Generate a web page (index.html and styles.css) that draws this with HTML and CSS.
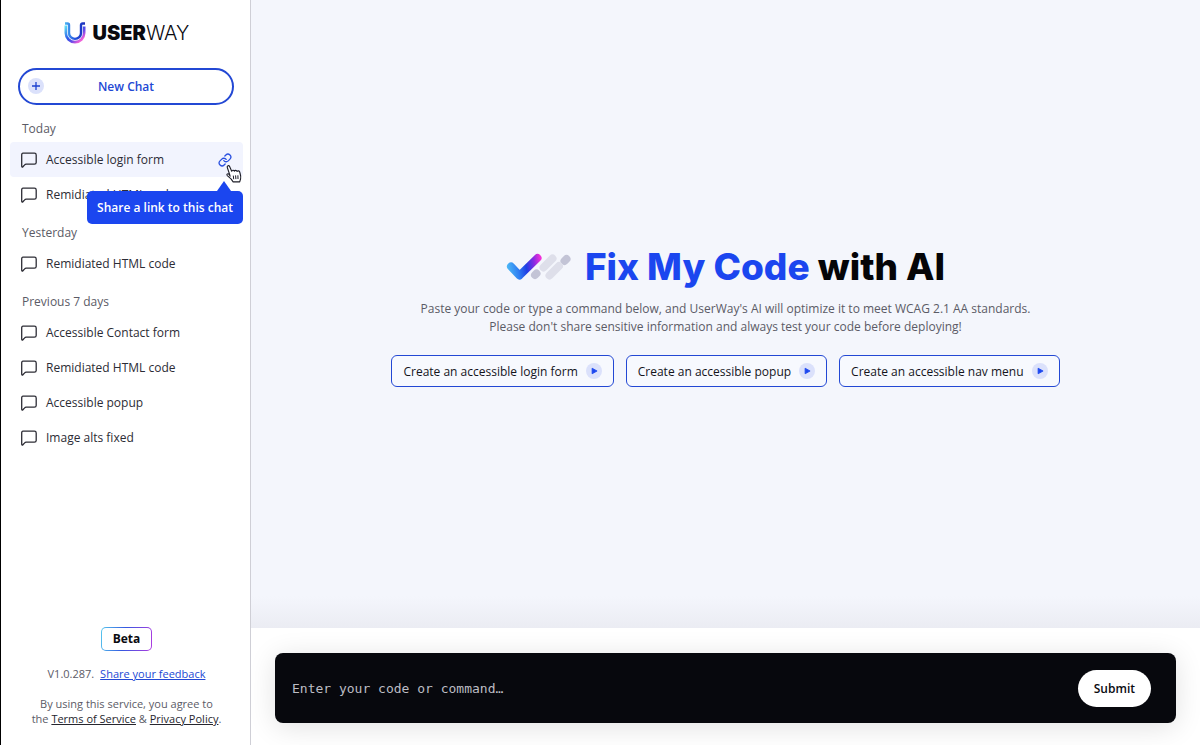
FILE: index.html
```html
<!DOCTYPE html>
<html lang="en">
  <head>
    <meta charset="utf-8" />
    <meta name="viewport" content="width=device-width, initial-scale=1" />
    <title>UserWay - Fix My Code with AI</title>
    <link rel="stylesheet" href="styles.css">
  </head>
  <body>
    <!-- shared icons -->
    <svg class="sprite" aria-hidden="true">
      <symbol id="icon-chat" viewBox="0 0 18 18">
        <path d="M3 2.2h11.4a1.8 1.8 0 0 1 1.8 1.8v7.4a1.8 1.8 0 0 1-1.8 1.8H6.3c-.8 0-1.4.3-1.9.9l-1.5 1.7c-.5.6-1.2.3-1.2-.5V4c0-1 .5-1.8 1.3-1.8z" fill="none" stroke="currentColor" stroke-width="1.3" stroke-linejoin="round" />
      </symbol>
      <symbol id="icon-play" viewBox="0 0 16 16">
        <circle cx="8" cy="8" r="8" fill="#dbe1fb" />
        <path d="M6.1 5.2v5.6l5-2.8z" fill="#1b46ef" stroke="#1b46ef" stroke-width=".8" stroke-linejoin="round" />
      </symbol>
    </svg>

    <aside class="sidebar">
      <a class="logo" href="#" aria-label="UserWay">
        <svg class="logo-mark" viewBox="0 0 22 22" aria-hidden="true">
          <defs>
            <linearGradient id="logo-outer" x1="0" y1="0" x2="1" y2="1">
              <stop offset="0" stop-color="#5fe0f5" />
              <stop offset=".45" stop-color="#2a55e8" />
              <stop offset=".65" stop-color="#6a4be8" />
              <stop offset=".85" stop-color="#ee5fd8" />
            </linearGradient>
            <linearGradient id="logo-inner" x1="0" y1="0" x2="1" y2="0">
              <stop offset="0" stop-color="#48b4f2" />
              <stop offset=".5" stop-color="#2450e0" />
              <stop offset="1" stop-color="#1a2fb8" />
            </linearGradient>
          </defs>
          <path d="M1.8 3.6v7.5a9.2 9 0 0 0 18.4 0V4.6" fill="none" stroke="url(#logo-outer)" stroke-width="2.6" />
          <path d="M1 1.5h2.4c1 0 1.6.6 1.6 1.6v7.9a6 5.9 0 0 0 12 0V3.1c0-1 .6-1.6 1.6-1.6h2.4" fill="none" stroke="url(#logo-inner)" stroke-width="2.4" />
        </svg>
        <span class="logo-text"><b>USER</b>WAY</span>
      </a>

      <button class="new-chat" type="button">
        <svg class="plus" viewBox="0 0 16 16" aria-hidden="true">
          <circle cx="8" cy="8" r="8" fill="#dbe1fb" />
          <path d="M8 4v8M4 8h8" stroke="#1b3fd0" stroke-width="1.3" />
        </svg>
        New Chat
      </button>

      <nav class="history">
        <h2>Today</h2>
        <ul>
          <li class="active">
            <a class="chat" href="#"><svg class="chat-icon"><use href="#icon-chat" /></svg>Accessible login form</a>
            <button class="share" type="button" aria-label="Share a link to this chat">
              <svg viewBox="0 0 24 24" aria-hidden="true">
                <path d="M10 13a5 5 0 0 0 7.54.54l3-3a5 5 0 0 0-7.07-7.07l-1.72 1.71M14 11a5 5 0 0 0-7.54-.54l-3 3a5 5 0 0 0 7.07 7.07l1.71-1.71" fill="none" stroke="#2a50e0" stroke-width="2.2" stroke-linecap="round" />
              </svg>
            </button>
            <span class="tooltip" role="tooltip">Share a link to this chat</span>
            <svg class="cursor" viewBox="0 0 18 20" aria-hidden="true">
              <path d="M5.2 12.1 2.3 3.5C1.7 1.7 3.9.9 4.6 2.5l2.1 4.8c.2-1.3 2.2-1.5 2.6-.1.5-1.2 2.3-1.1 2.7.2.8-.9 2.4-.6 2.7.6.5 2 1.6 4.5.9 6.9l-.9 3H8.2c-1.3-2.7-3.7-4.6-5.9-6.3-1-.9.1-2.4 1.4-1.6z" fill="#fff" stroke="#1c1c26" stroke-width="1.1" stroke-linejoin="round" />
              <path d="M8.3 11.6l.4 3.6M10.6 11.4l.3 3.7M12.9 11.3l.1 3.7" stroke="#1c1c26" stroke-width="1" />
            </svg>
          </li>
          <li><a class="chat" href="#"><svg class="chat-icon"><use href="#icon-chat" /></svg>Remidiated HTML code</a></li>
        </ul>
        <h2>Yesterday</h2>
        <ul>
          <li><a class="chat" href="#"><svg class="chat-icon"><use href="#icon-chat" /></svg>Remidiated HTML code</a></li>
        </ul>
        <h2>Previous 7 days</h2>
        <ul>
          <li><a class="chat" href="#"><svg class="chat-icon"><use href="#icon-chat" /></svg>Accessible Contact form</a></li>
          <li><a class="chat" href="#"><svg class="chat-icon"><use href="#icon-chat" /></svg>Remidiated HTML code</a></li>
          <li><a class="chat" href="#"><svg class="chat-icon"><use href="#icon-chat" /></svg>Accessible popup</a></li>
          <li><a class="chat" href="#"><svg class="chat-icon"><use href="#icon-chat" /></svg>Image alts fixed</a></li>
        </ul>
      </nav>

      <footer class="sidebar-footer">
        <span class="beta">Beta</span>
        <p class="version">V1.0.287. <a href="#">Share your feedback</a></p>
        <p class="terms">
          By using this service, you agree to<br>
          the <a href="#">Terms of Service</a> &amp; <a href="#">Privacy Policy</a>.
        </p>
      </footer>
    </aside>

    <main class="content">
      <section class="intro">
        <div class="title">
          <svg class="checks" viewBox="0 0 66 28" aria-hidden="true">
            <defs>
              <linearGradient id="check-fill" gradientUnits="userSpaceOnUse" x1="1" y1="14" x2="35" y2="8">
                <stop offset="0" stop-color="#4cb8f5" />
                <stop offset=".3" stop-color="#2f7ff2" />
                <stop offset=".55" stop-color="#1f3fe4" />
                <stop offset=".8" stop-color="#8a2be2" />
                <stop offset="1" stop-color="#f02fd8" />
              </linearGradient>
            </defs>
            <g fill="none" stroke-width="8" stroke-linecap="round" stroke-linejoin="round">
              <path d="M29 22l1.5-1.5M58.5 8l2-2" stroke="#c3c4d6" />
              <path d="M37.5 14.5l9-9M43.5 22.5l9.5-9.5" stroke="#dedfea" />
              <path d="M5 13.5l8.500 9L31.500 5" stroke="url(#check-fill)" />
            </g>
          </svg>
          <h1><span>Fix My Code</span> with AI</h1>
        </div>
        <p class="lead">
          Paste your code or type a command below, and UserWay's AI will optimize it to meet WCAG 2.1 AA standards.<br>
          Please don't share sensitive information and always test your code before deploying!
        </p>
        <div class="prompts">
          <button type="button">Create an accessible login form <svg><use href="#icon-play" /></svg></button>
          <button type="button">Create an accessible popup <svg><use href="#icon-play" /></svg></button>
          <button type="button">Create an accessible nav menu <svg><use href="#icon-play" /></svg></button>
        </div>
      </section>

      <div class="composer">
        <form class="composer-box">
          <input type="text" placeholder="Enter your code or command…" aria-label="Enter your code or command">
          <button type="submit">Submit</button>
        </form>
      </div>
    </main>
  </body>
</html>
```
FILE: styles.css
```css
* {
  box-sizing: border-box;
}

body {
  display: flex;
  min-height: 100vh;
  margin: 0;
  font-family: "Open Sans", Inter, sans-serif;
  font-size: 12px;
  color: #26262e;
  background: #fff;
}

h1,
h2,
p,
ul {
  margin: 0;
  padding: 0;
}

ul {
  list-style: none;
}

button,
input {
  font: inherit;
}

button {
  cursor: pointer;
}

.sprite {
  position: absolute;
  width: 0;
  height: 0;
}

/* sidebar */
.sidebar {
  display: flex;
  flex-direction: column;
  flex: 0 0 251px;
  border-left: 1px solid #000;
  border-right: 1px solid #cfcfd6;
  padding: 22px 7px 19px 9px;
}

.logo {
  display: flex;
  align-items: center;
  justify-content: center;
  gap: 7px;
  height: 22px;
  color: #0a0a10;
  text-decoration: none;
}

.logo-mark {
  width: 22px;
  height: 22px;
}

.logo-text {
  font-family: Inter, sans-serif;
  font-size: 20px;
  font-weight: 300;
  line-height: 22px;
}

.logo-text b {
  font-weight: 900;
}

.new-chat {
  position: relative;
  height: 37px;
  margin: 24px 9px 3px 8px;
  border: 2px solid #2348d4;
  border-radius: 19px;
  background: #fff;
  color: #2348d4;
  font-weight: 600;
}

.plus {
  position: absolute;
  top: 8px;
  left: 8px;
  width: 16px;
  height: 16px;
}

.history {
  flex: 1;
}

.history h2 {
  padding: 11px 12px 3px;
  color: #5b5b66;
  font-size: 12px;
  line-height: 20px;
  font-weight: 400;
}

.history li {
  position: relative;
  display: flex;
  align-items: center;
  height: 35px;
  padding: 0 11px 0 10px;
  border-radius: 4px;
}

.history .active {
  z-index: 1;
  background: #f2f4fe;
}

.chat {
  display: flex;
  align-items: center;
  flex: 1;
  gap: 8px;
  color: #2c2c35;
  font-weight: 500;
  text-decoration: none;
}

.chat-icon {
  width: 18px;
  height: 18px;
}

.share {
  display: flex;
  padding: 0;
  border: 0;
  background: none;
}

.share svg {
  width: 14px;
  height: 14px;
}

.tooltip {
  position: absolute;
  top: 49px;
  right: 0;
  padding: 0 10px;
  border-radius: 5px;
  background: #1b46ef;
  color: #fff;
  font-weight: 600;
  line-height: 33px;
  white-space: nowrap;
}

.tooltip::before {
  content: "";
  position: absolute;
  right: 12px;
  bottom: 100%;
  border: 7px solid transparent;
  border-top: 0;
  border-bottom: 10px solid #1b46ef;
}

.cursor {
  position: absolute;
  top: 22px;
  right: 0;
  width: 18px;
  height: 20px;
}

.sidebar-footer {
  display: flex;
  flex-direction: column;
  align-items: center;
  color: #5b5b66;
  font-size: 11px;
  line-height: 15px;
  text-align: center;
}

.beta {
  padding: 0 11px;
  border: 1px solid transparent;
  border-radius: 5px;
  background:
    linear-gradient(#fff, #fff) padding-box,
    linear-gradient(100deg, #58c8ee, #3558e0 45%, #b03be0) border-box;
  color: #0a0a10;
  font-size: 12px;
  font-weight: 700;
  line-height: 22px;
}

.version {
  margin: 15px 0;
}

.version a {
  margin-left: 3px;
  color: #2348d4;
}

.terms a {
  color: #26262e;
}

/* main area */
.content {
  display: flex;
  flex-direction: column;
  flex: 1;
  min-width: 0;
}

.intro {
  display: flex;
  flex-direction: column;
  align-items: center;
  justify-content: center;
  flex: 1;
  padding: 4px 16px 0;
  background: linear-gradient(to top, #ebecf3, #f4f6fc 32px);
}

.title {
  display: flex;
  align-items: center;
  gap: 13px;
}

.checks {
  width: 66px;
  height: 28px;
}

h1 {
  color: #050508;
  font-family: Inter, sans-serif;
  font-size: 37px;
  font-weight: 800;
  line-height: 44px;
}

h1 span {
  color: #1b46ef;
}

.lead {
  margin: 11px 0 19px;
  color: #5b5b66;
  line-height: 18px;
  text-align: center;
}

.prompts {
  display: flex;
  flex-wrap: wrap;
  justify-content: center;
  gap: 12px;
}

.prompts button {
  display: flex;
  align-items: center;
  gap: 8px;
  height: 32px;
  padding: 0 11px;
  border: 1px solid #2348d4;
  border-radius: 6px;
  background: #f7f9fe;
  color: #14141c;
  font-weight: 500;
}

.prompts svg {
  width: 16px;
  height: 16px;
}

.composer {
  padding: 25px 24px 22px;
  background: #fff;
}

.composer-box {
  display: flex;
  align-items: center;
  height: 70px;
  padding: 0 25px 0 17px;
  border-radius: 8px;
  background: #07080d;
  box-shadow: 0 4px 28px rgba(0, 0, 0, 0.12);
}

.composer-box input {
  flex: 1;
  min-width: 0;
  padding: 0;
  border: 0;
  outline: 0;
  background: none;
  color: #fff;
  font-family: "DejaVu Sans Mono", monospace;
  font-size: 13px;
}

.composer-box input::placeholder {
  color: #bdbdc4;
  opacity: 1;
}

.composer-box button {
  height: 37px;
  padding: 0 16px;
  border: 0;
  border-radius: 19px;
  background: #fff;
  color: #0a0a10;
  font-weight: 600;
}
```
